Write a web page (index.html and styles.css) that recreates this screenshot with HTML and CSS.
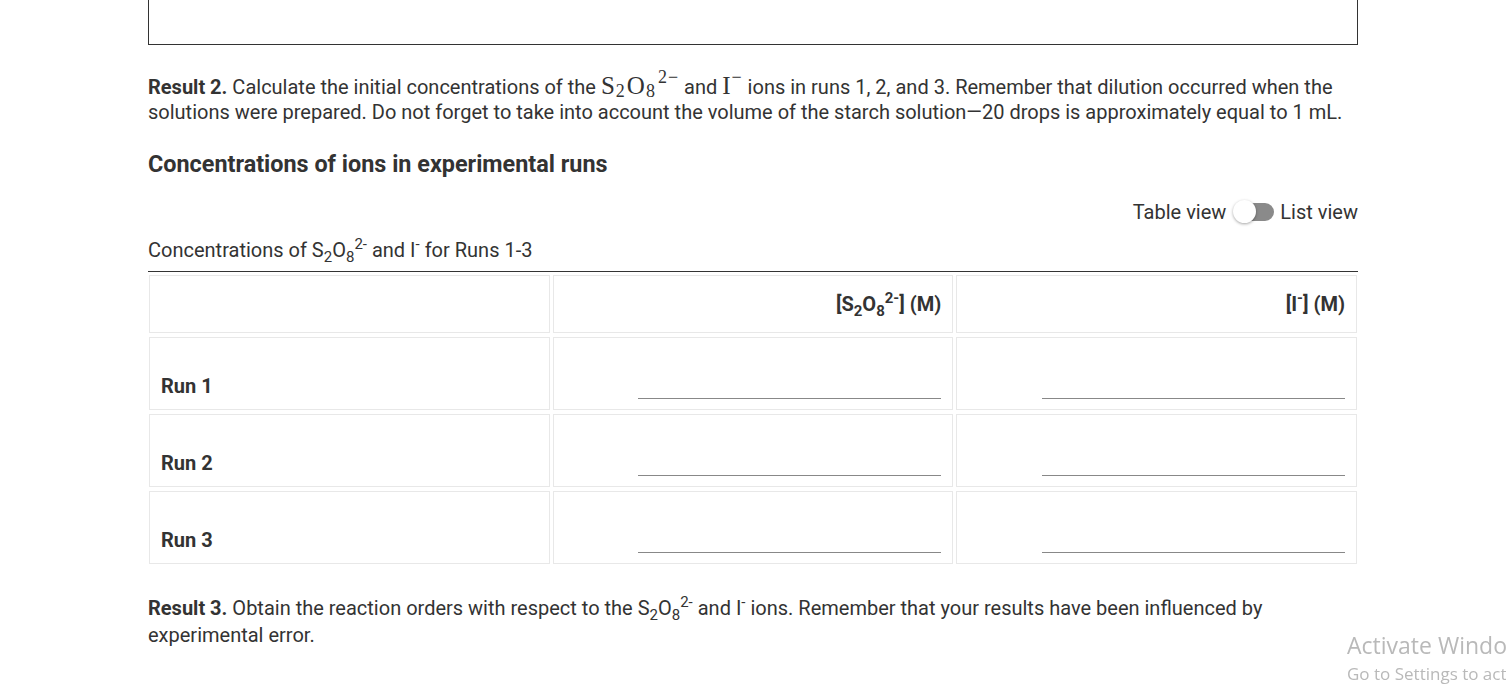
FILE: index.html
```html
<!DOCTYPE html>
<html>
<head>
<meta charset="utf-8">
<link rel="stylesheet" href="styles.css">
</head>
<body>
<div class="page">
  <div class="topbox"></div>
  <p class="para first"><b>Result 2.</b> Calculate the initial concentrations of the <span class="math">S<sub>2</sub>O<sub>8</sub><sup>2&minus;</sup></span> and <span class="math">I<sup>&minus;</sup></span> ions in runs 1, 2, and 3. Remember that dilution occurred when the solutions were prepared. Do not forget to take into account the volume of the starch solution&mdash;20 drops is approximately equal to 1 mL.</p>
  <h2 class="heading">Concentrations of ions in experimental runs</h2>
  <div class="toggle-row">
    <span class="tlabel">Table view</span>
    <span class="switch"><span class="track"></span><span class="knob"></span></span>
    <span class="tlabel">List view</span>
  </div>
  <div class="caption">Concentrations of S<sub>2</sub>O<sub>8</sub><sup>2-</sup> and I<sup>-</sup> for Runs 1-3</div>
  <table class="grid">
    <tr class="head">
      <th></th>
      <th>[S<sub>2</sub>O<sub>8</sub><sup>2-</sup>] (M)</th>
      <th>[I<sup>-</sup>] (M)</th>
    </tr>
    <tr>
      <td class="label">Run 1</td>
      <td class="val"><span class="field"></span></td>
      <td class="val"><span class="field"></span></td>
    </tr>
    <tr>
      <td class="label">Run 2</td>
      <td class="val"><span class="field"></span></td>
      <td class="val"><span class="field"></span></td>
    </tr>
    <tr>
      <td class="label">Run 3</td>
      <td class="val"><span class="field"></span></td>
      <td class="val"><span class="field"></span></td>
    </tr>
  </table>
  <p class="para last"><b>Result 3.</b> Obtain the reaction orders with respect to the S<sub>2</sub>O<sub>8</sub><sup>2-</sup> and I<sup>-</sup> ions. Remember that your results have been influenced by experimental error.</p>
</div>
<div class="watermark">
  <div class="wm1">Activate Windows</div>
  <div class="wm2">Go to Settings to activate Windows.</div>
</div>
</body>
</html>
```
FILE: styles.css
```css
html, body {
  margin: 0;
  padding: 0;
  background: #fff;
  overflow: hidden;
}
body {
  font-family: Roboto, "Liberation Sans", sans-serif;
  color: #333;
  font-size: 20px;
}
.page {
  width: 1210px;
  margin: 0 auto;
}
.topbox {
  height: 44px;
  border: 1px solid #333;
  border-top: none;
}
.para {
  margin: 0;
  line-height: 25px;
}
.para b { font-weight: 700; }
.para.first { margin-top: 28px; }
.math {
  font-family: "Liberation Serif", "DejaVu Serif", serif;
  font-size: 25px;
  color: #333;
}
.math sub { font-size: 18px; vertical-align: -3px; line-height: 0; margin: 0 2px 0 1px; }
.math sup { font-size: 18px; vertical-align: 11px; line-height: 0; margin-left: 1px; letter-spacing: 1px; }
sub { font-size: 0.75em; line-height: 0; vertical-align: -5px; }
sup { font-size: 0.75em; line-height: 0; vertical-align: 8px; }
.heading {
  margin: 26px 0 0;
  font-size: 23.4px;
  font-weight: 700;
  line-height: 26px;
}
.toggle-row {
  margin-top: 22px;
  display: flex;
  justify-content: flex-end;
  align-items: center;
  height: 26px;
}
.tlabel { line-height: 26px; }
.switch {
  position: relative;
  width: 41px;
  height: 26px;
  margin: 0 6px 0 7px;
}
.track {
  position: absolute;
  left: 10px;
  top: 4px;
  width: 31px;
  height: 18px;
  border-radius: 0 9px 9px 0;
  background: #8a8a8a;
}
.knob {
  position: absolute;
  left: 0;
  top: 1px;
  width: 23px;
  height: 23px;
  border-radius: 50%;
  background: #fff;
  box-shadow: 0 1px 3px rgba(0,0,0,0.35);
}
.caption {
  margin-top: 12px;
  line-height: 26px;
  padding-bottom: 8px;
  border-bottom: 1px solid #333;
}
.grid {
  width: 1214px;
  margin-left: -2px;
  margin-top: -1px;
  border-collapse: separate;
  border-spacing: 3px 4px;
  table-layout: fixed;
}
.grid th, .grid td {
  box-sizing: border-box;
  border: 1px solid #e8e8e8;
  padding: 0 11px;
}
.grid th {
  height: 58px;
  text-align: right;
  font-weight: 700;
  font-size: 20px;
}
.grid td {
  height: 73px;
  vertical-align: bottom;
}
.label {
  font-weight: 700;
  padding-bottom: 11px !important;
  line-height: 24px;
}
.val {
  text-align: right;
  padding-bottom: 10px !important;
}
.field {
  display: inline-block;
  width: 303px;
  height: 24px;
  border-bottom: 1px solid #888;
  vertical-align: bottom;
}
.para.last {
  margin-top: 27px;
  line-height: 27px;
}
.watermark {
  position: fixed;
  left: 1347px;
  top: 630px;
  white-space: nowrap;
  font-family: "Open Sans", "Noto Sans", sans-serif;
  color: #b9b9b9;
}
.wm1 { font-size: 23px; line-height: 30px; }
.wm2 { font-size: 17px; line-height: 28px; }
```
